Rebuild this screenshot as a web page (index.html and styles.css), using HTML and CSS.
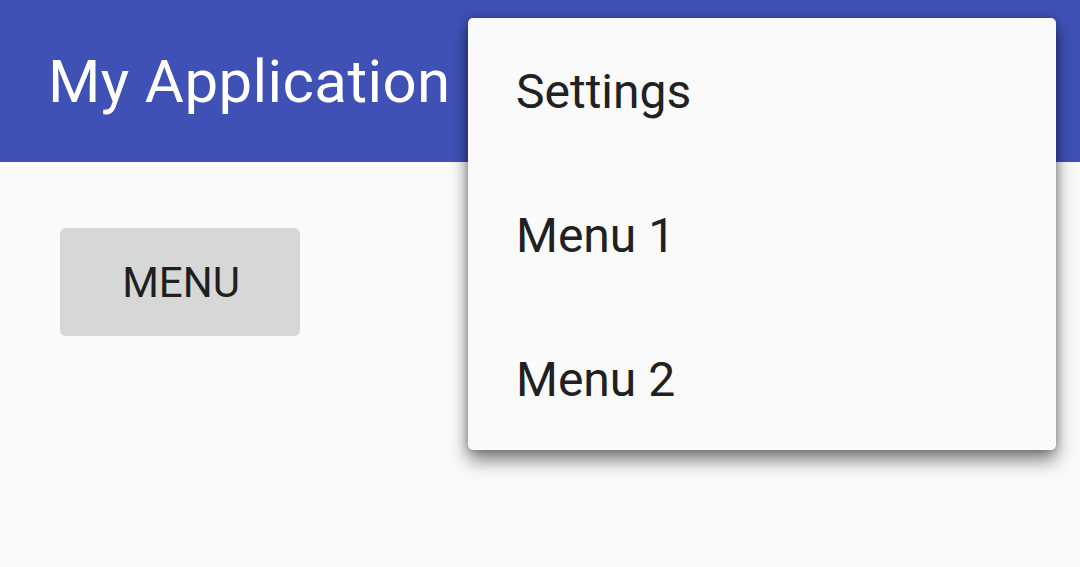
FILE: index.html
```html
<!DOCTYPE html>
<html lang="en">
<head>
    <meta charset="UTF-8">
    <meta name="viewport" content="width=device-width, initial-scale=1.0">
    <title>My Application</title>
    <link rel="stylesheet" href="styles.css">
</head>
<body>
    <header class="app-bar">
        <h1 class="app-title">My Application</h1>
    </header>

    <main class="content">
        <button class="menu-button">MENU</button>
    </main>

    <ul class="popup-menu">
        <li class="menu-item">Settings</li>
        <li class="menu-item">Menu 1</li>
        <li class="menu-item">Menu 2</li>
    </ul>
</body>
</html>
```

FILE: styles.css
```css
body {
    margin: 0;
    font-family: Roboto, "Liberation Sans", sans-serif;
    background-color: #fafafa;
    height: 567px;
    overflow: hidden;
}

.app-bar {
    height: 162px;
    background-color: #3f51b5;
    display: flex;
    align-items: center;
    padding-left: 48px;
}

.app-title {
    margin: 0;
    font-size: 60px;
    font-weight: 400;
    letter-spacing: 0.4px;
    color: #fff;
}

.content {
    padding: 66px 0 0 60px;
}

.menu-button {
    width: 240px;
    height: 108px;
    border: none;
    border-radius: 6px;
    background-color: #d6d7d7;
    color: #1f1f1f;
    font-family: Roboto, "Liberation Sans", sans-serif;
    font-size: 42px;
    font-weight: 400;
    padding: 0 0 0 2px;
    cursor: pointer;
}

/* popup lies over the app bar and content */
.popup-menu {
    position: absolute;
    top: 18px;
    right: 24px;
    width: 588px;
    margin: 0;
    padding: 0;
    list-style: none;
    background-color: #fafafa;
    border-radius: 5px;
    box-shadow: 0 10px 18px rgba(0, 0, 0, 0.5), 0 0 8px rgba(0, 0, 0, 0.25);
}

.menu-item {
    height: 144px;
    line-height: 148px;
    padding-left: 48px;
    font-size: 48px;
    color: #212121;
}
```
